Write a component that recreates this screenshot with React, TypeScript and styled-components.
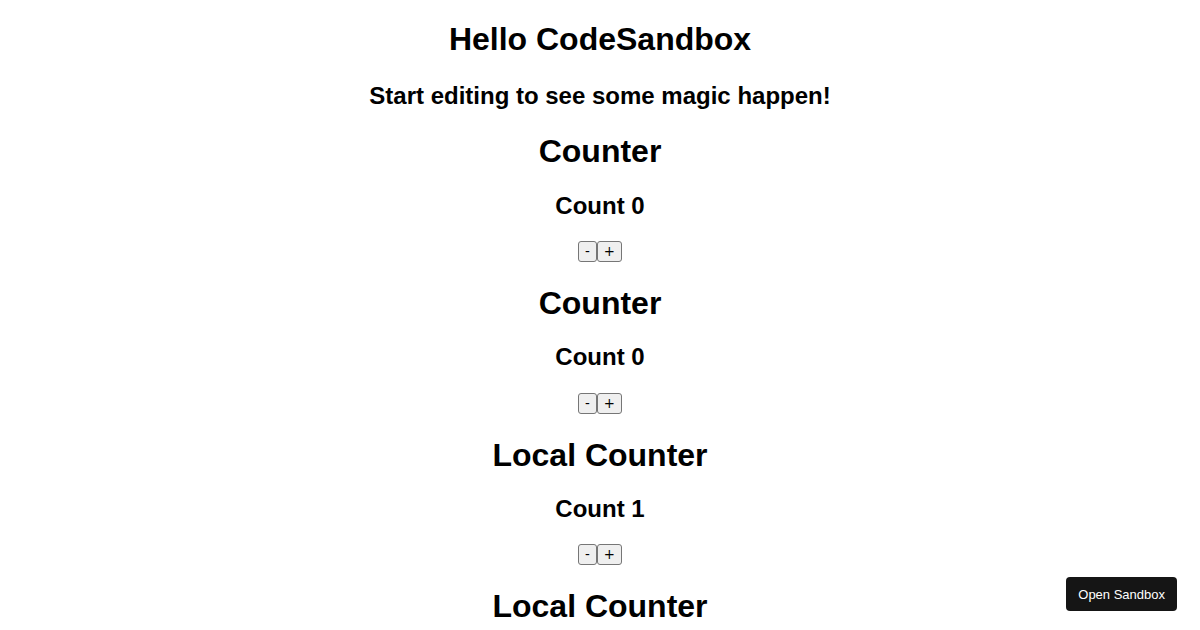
import React, { useState } from 'react';
import styled, { createGlobalStyle } from 'styled-components';

const GlobalStyle = createGlobalStyle`
  body {
    margin: 8px;
    background: #ffffff;
    color: #000000;
    font-family: "Liberation Sans", Arial, sans-serif;
  }
`;

const AppWrapper = styled.div`
  text-align: center;
  font-family: "Liberation Sans", Arial, sans-serif;
`;

const Title = styled.h1`
  font-size: 32px;
  font-weight: bold;
  margin: 21.44px 0;
`;

const PageTitle = styled(Title)`
  margin-top: 12.7px;
`;

const Subtitle = styled.h2`
  font-size: 24px;
  font-weight: bold;
  margin: 19.92px 0;
`;

const Intro = styled(Subtitle)`
  margin: 24.6px 0 22.8px;
`;

const Controls = styled.div`
  display: flex;
  justify-content: center;
  padding: 1.5px 0 1.5px;
`;

const StepButton = styled.button`
  height: 21px;
  font-family: "DejaVu Sans", sans-serif;
  font-size: 13.33px;
  color: #000000;
  background-color: #efefef;
  border: 1px solid #767676;
  border-radius: 3px;
  padding: 1px 6px;
  margin: 0;
`;

const OpenSandboxButton = styled.a`
  position: fixed;
  right: 23px;
  bottom: 19px;
  display: flex;
  align-items: center;
  height: 34px;
  padding: 0 12px;
  box-sizing: border-box;
  border-radius: 4px;
  background: #151515;
  color: #ffffff;
  font-family: "Liberation Sans", Arial, sans-serif;
  font-size: 13px;
  text-decoration: none;
`;

interface CounterProps {
  title: string;
  initial?: number;
}

function Counter({ title, initial = 0 }: CounterProps) {
  const [count, setCount] = useState(initial);
  return (
    <div>
      <Title>{title}</Title>
      <Subtitle>Count {count}</Subtitle>
      <Controls>
        <StepButton onClick={() => setCount((c) => c - 1)}>-</StepButton>
        <StepButton onClick={() => setCount((c) => c + 1)}>+</StepButton>
      </Controls>
    </div>
  );
}

export default function App() {
  return (
    <AppWrapper>
      <GlobalStyle />
      <PageTitle>Hello CodeSandbox</PageTitle>
      <Intro>Start editing to see some magic happen!</Intro>
      <Counter title="Counter" />
      <Counter title="Counter" />
      <Counter title="Local Counter" initial={1} />
      <Counter title="Local Counter" initial={1} />
      <OpenSandboxButton href="#">Open Sandbox</OpenSandboxButton>
    </AppWrapper>
  );
}
